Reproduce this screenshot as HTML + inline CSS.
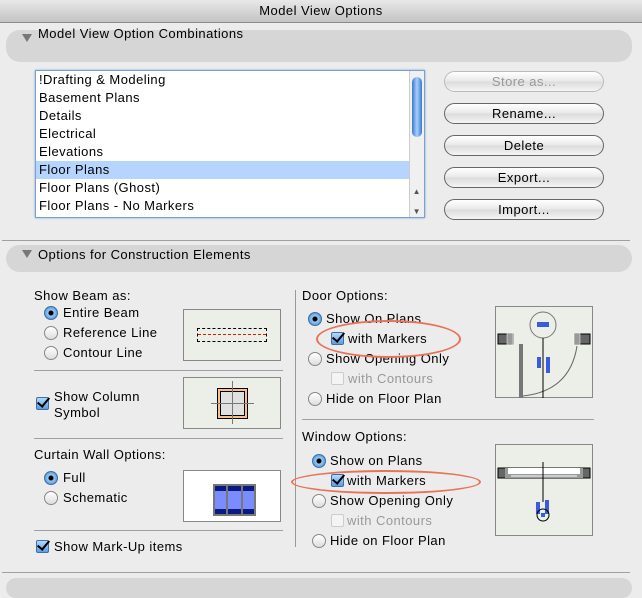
<!DOCTYPE html>
<html><head><meta charset="utf-8"><style>
*{margin:0;padding:0;box-sizing:border-box}
body{width:642px;height:582px;overflow:hidden;background:#ececec;font-family:"Liberation Sans",sans-serif;font-size:13px;letter-spacing:0.45px;color:#000;position:relative}
.a{position:absolute;white-space:nowrap;line-height:16px}
.title{position:absolute;left:0;top:0;width:642px;height:23px;background:linear-gradient(#e8e8e8,#c4c4c4);border-bottom:1px solid #8a8a8a;text-align:center;line-height:22px;font-size:13px}
.pill{position:absolute;left:6px;width:626px;background:#d6d6d6;border-radius:14px}
.tri{position:absolute;width:0;height:0;border-left:5px solid transparent;border-right:5px solid transparent;border-top:8px solid #777}
.list{position:absolute;left:35px;top:70px;width:390px;height:148px;background:#fff;border:1px solid #7aa0d0;box-shadow:0 0 2px #7aa0d0;overflow:hidden}
.list div{height:18px;line-height:18px;padding-left:3px}
.sel{background:#b5d5ff}
.btn{position:absolute;left:444px;width:160px;height:21px;border:1px solid #666;border-radius:11px;background:linear-gradient(#fff,#e8e8e8 50%,#dcdcdc 51%,#f4f4f4);text-align:center;line-height:19px}
.hr{position:absolute;height:1px;background:#a0a0a0}
.rad{position:absolute;width:14px;height:14px;border-radius:50%;border:1px solid #888;background:linear-gradient(#fff,#ddd)}
.rad.on{background:radial-gradient(circle,#000 0 2px,#9ccaf2 3px,#4a90d8 7px);border-color:#3b6fa8}
.cb{position:absolute;width:13px;height:13px;border:1px solid #888;border-radius:2px;background:#fff}
.cb.on{background:linear-gradient(#b8d8f8,#5a9ee0);border-color:#3b6fa8}
.cb.on::after{content:"";position:absolute;left:3px;top:-3px;width:5px;height:10px;border-right:2px solid #000;border-bottom:2px solid #000;transform:rotate(40deg)}
.cb.dis{border-color:#ccc;background:#f4f4f4}
.box{position:absolute;background:#ebefe7;border:1px solid #888}
.dis{color:#999}
.ell{position:absolute;border:2px solid #e8735a;border-radius:50%}
</style></head><body>
<div class="title">Model View Options</div>
<div class="pill" style="top:30px;height:32px"></div>
<div class="tri" style="left:22px;top:34px"></div>
<div class="a" style="left:38px;top:26px">Model View Option Combinations</div>

<div class="list">
<div>!Drafting &amp; Modeling</div><div>Basement Plans</div><div>Details</div><div>Electrical</div><div>Elevations</div><div class="sel">Floor Plans</div><div>Floor Plans (Ghost)</div><div>Floor Plans - No Markers</div>
<div style="position:absolute;right:0;top:0;width:15px;height:146px;background:#f0f0f0;border-left:1px solid #ccc;padding:0"></div>
<div style="position:absolute;right:2px;top:6px;width:10px;height:60px;border-radius:5px;background:linear-gradient(90deg,#3a78d0,#a6d0f8,#3a78d0);padding:0"></div>
<div style="position:absolute;right:3px;top:116px;font-size:8px;line-height:10px;color:#555;padding:0;height:auto">▲<br><br>▼</div>
</div>

<div class="btn dis" style="top:71px;border-color:#bbb">Store as...</div>
<div class="btn" style="top:103px">Rename...</div>
<div class="btn" style="top:135px">Delete</div>
<div class="btn" style="top:167px">Export...</div>
<div class="btn" style="top:199px">Import...</div>

<div class="hr" style="left:2px;top:240px;width:628px"></div>
<div class="pill" style="top:245px;height:27px"></div>
<div class="tri" style="left:22px;top:250px"></div>
<div class="a" style="left:38px;top:247px">Options for Construction Elements</div>

<div class="a" style="left:34px;top:288px">Show Beam as:</div>
<div class="rad on" style="left:44px;top:306px"></div><div class="a" style="left:63px;top:305px">Entire Beam</div>
<div class="rad" style="left:44px;top:326px"></div><div class="a" style="left:63px;top:325px">Reference Line</div>
<div class="rad" style="left:44px;top:346px"></div><div class="a" style="left:63px;top:345px">Contour Line</div>
<div class="box" style="left:183px;top:309px;width:98px;height:52px"></div>
<div style="position:absolute;left:197px;top:328px;width:70px;height:14px;border:1px dashed #000"></div>
<div style="position:absolute;left:198px;top:334px;width:68px;border-top:1px dashed #d02000"></div>
<div class="hr" style="left:34px;top:370px;width:249px"></div>

<div class="cb on" style="left:36px;top:397px"></div>
<div class="a" style="left:54px;top:389px">Show Column<br>Symbol</div>
<div class="box" style="left:183px;top:377px;width:98px;height:52px"></div>
<div style="position:absolute;left:217px;top:388px;width:31px;height:31px;border:1px solid #000;background:#f8c08a;padding:2px"><div style="width:100%;height:100%;border:1px solid #000;background:#e0e0e0"></div></div>
<div style="position:absolute;left:232px;top:381px;width:1px;height:43px;background:#777"></div>
<div style="position:absolute;left:211px;top:403px;width:43px;height:1px;background:#777"></div>
<div class="hr" style="left:34px;top:438px;width:249px"></div>

<div class="a" style="left:34px;top:447px">Curtain Wall Options:</div>
<div class="rad on" style="left:44px;top:471px"></div><div class="a" style="left:63px;top:470px">Full</div>
<div class="rad" style="left:44px;top:491px"></div><div class="a" style="left:63px;top:490px">Schematic</div>
<div style="position:absolute;left:183px;top:470px;width:98px;height:52px;background:#fff;border:1px solid #888"></div>
<div style="position:absolute;left:213px;top:484px;width:43px;height:32px;background:#7b8cff;border:2px solid #777">
<div style="position:absolute;left:0;top:0;width:100%;height:5px;background:#0a1a80"></div>
<div style="position:absolute;left:0;bottom:0;width:100%;height:5px;background:#0a1a80"></div>
<div style="position:absolute;left:11px;top:0;width:2px;height:100%;background:#777"></div>
<div style="position:absolute;left:26px;top:0;width:2px;height:100%;background:#777"></div>
</div>
<div class="hr" style="left:34px;top:530px;width:249px"></div>
<div class="cb on" style="left:36px;top:540px"></div>
<div class="a" style="left:54px;top:539px">Show Mark-Up items</div>

<div style="position:absolute;left:295px;top:290px;width:1px;height:257px;background:#999"></div>

<div class="a" style="left:302px;top:288px">Door Options:</div>
<div class="rad on" style="left:308px;top:312px"></div><div class="a" style="left:326px;top:311px">Show On Plans</div>
<div class="cb on" style="left:331px;top:332px"></div><div class="a" style="left:348px;top:331px">with Markers</div>
<div class="rad" style="left:308px;top:352px"></div><div class="a" style="left:326px;top:351px">Show Opening Only</div>
<div class="cb dis" style="left:331px;top:372px"></div><div class="a dis" style="left:348px;top:371px">with Contours</div>
<div class="rad" style="left:308px;top:392px"></div><div class="a" style="left:326px;top:391px">Hide on Floor Plan</div>
<div class="ell" style="left:316px;top:320px;width:145px;height:38px"></div>
<div class="box" style="left:495px;top:306px;width:98px;height:92px"></div>
<svg style="position:absolute;left:495px;top:306px" width="98" height="92">
<rect x="3" y="28" width="15" height="10" fill="#666" stroke="#000"/><rect x="12" y="27" width="6" height="12" fill="#999" stroke="#fff" stroke-width=".5"/>
<rect x="80" y="28" width="15" height="10" fill="#666" stroke="#000"/><rect x="79" y="27" width="6" height="12" fill="#999" stroke="#fff" stroke-width=".5"/>
<rect x="24" y="38" width="4" height="58" fill="#777"/>
<path d="M28 90 Q75 85 82 40" fill="none" stroke="#666"/>
<circle cx="48" cy="19" r="13" fill="none" stroke="#777"/>
<rect x="42" y="16" width="12" height="5" fill="#3a5ae0"/>
<line x1="48" y1="32" x2="48" y2="93" stroke="#000"/>
<rect x="42" y="51" width="4" height="11" fill="#3a5ae0"/><rect x="51" y="51" width="4" height="16" fill="#3a5ae0"/>
</svg>
<div class="hr" style="left:302px;top:419px;width:292px"></div>

<div class="a" style="left:302px;top:429px">Window Options:</div>
<div class="rad on" style="left:312px;top:454px"></div><div class="a" style="left:330px;top:453px">Show on Plans</div>
<div class="cb on" style="left:331px;top:474px"></div><div class="a" style="left:347px;top:473px">with Markers</div>
<div class="rad" style="left:312px;top:494px"></div><div class="a" style="left:330px;top:493px">Show Opening Only</div>
<div class="cb dis" style="left:331px;top:514px"></div><div class="a dis" style="left:347px;top:513px">with Contours</div>
<div class="rad" style="left:312px;top:534px"></div><div class="a" style="left:330px;top:533px">Hide on Floor Plan</div>
<div class="ell" style="left:291px;top:470px;width:190px;height:24px"></div>
<div class="box" style="left:495px;top:444px;width:98px;height:92px"></div>
<svg style="position:absolute;left:495px;top:444px" width="98" height="92">
<rect x="3" y="24" width="92" height="10" fill="#666" stroke="#000"/>
<rect x="10" y="24" width="78" height="10" fill="#999"/>
<rect x="13" y="24" width="72" height="6" fill="#fff"/>
<line x1="16" y1="32" x2="82" y2="32" stroke="#fff"/>
<line x1="48" y1="18" x2="48" y2="58" stroke="#000"/>
<rect x="41" y="58" width="4" height="12" fill="#3a5ae0"/><rect x="50" y="56" width="4" height="14" fill="#3a5ae0"/>
<circle cx="48" cy="71" r="6" fill="none" stroke="#000"/><rect x="46" y="69" width="4" height="4" fill="#3a5ae0"/>
</svg>

<div class="hr" style="left:2px;top:572px;width:628px"></div>
<div class="pill" style="top:578px;height:20px"></div>
</body></html>
